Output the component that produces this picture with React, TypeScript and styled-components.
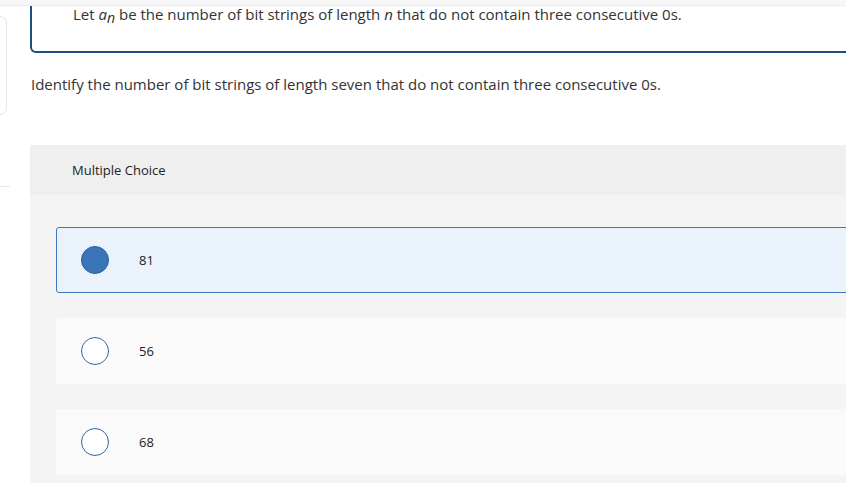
import React from "react";
import styled, { createGlobalStyle } from "styled-components";

const Global = createGlobalStyle`
  html, body { margin: 0; padding: 0; background: #ffffff; overflow: hidden; }
  body { font-family: "Open Sans", "Liberation Sans", sans-serif; color: #333333; }
`;

const Page = styled.div`
  width: 846px;
  height: 483px;
  overflow: hidden;
  display: flex;
  flex-direction: column;
`;

const TopStrip = styled.div`
  height: 5px;
  background: #f7f7f7;
  border-bottom: 1px solid #ececec;
  flex: none;
`;

const Main = styled.div`
  display: flex;
  flex: 1;
  min-height: 0;
`;

const Side = styled.div`
  width: 30px;
  flex: none;
  display: flex;
  flex-direction: column;
`;

const SideCard = styled.div`
  margin: 10px 0 0 -20px;
  width: 25px;
  height: 97px;
  border: 1px solid #e6e6e6;
  border-radius: 7px;
`;

const SideRule = styled.div`
  margin-top: 71px;
  width: 10px;
  height: 1px;
  background: #e6e6e6;
`;

const Content = styled.div`
  width: 900px;
  flex: none;
  display: flex;
  flex-direction: column;
`;

const PromptBox = styled.div`
  height: 45px;
  border-left: 2px solid #1f4b86;
  border-bottom: 2px solid #1f4b86;
  border-bottom-left-radius: 6px;
  padding-left: 41px;
  font-size: 15px;
  line-height: 16px;
`;

const Var = styled.i`
  font-style: italic;
`;

const Sub = styled.span`
  font-style: italic;
  font-size: 14px;
  position: relative;
  top: 3px;
`;

const Question = styled.p`
  margin: 21px 0 0 1px;
  font-size: 15px;
  line-height: 20px;
`;

const Panel = styled.section`
  margin-top: 51px;
  display: flex;
  flex-direction: column;
  flex: 1;
`;

const PanelHeader = styled.div`
  height: 50px;
  background: #efefef;
  display: flex;
  align-items: center;
  padding-left: 42px;
  font-size: 13px;
  color: #222222;
`;

const PanelBody = styled.div`
  flex: 1;
  background: #f4f4f4;
  padding: 32px 0 0 26px;
  display: flex;
  flex-direction: column;
  gap: 25px;
`;

const Option = styled.div<{ $selected?: boolean }>`
  height: 64px;
  display: flex;
  align-items: center;
  gap: 30px;
  padding-left: 24px;
  border: 1px solid ${(p) => (p.$selected ? "#3b78c2" : "transparent")};
  border-radius: 3px;
  background: ${(p) => (p.$selected ? "#eaf2fb" : "#fafafa")};
  font-size: 13px;
  color: #222222;
`;

const Radio = styled.span<{ $checked?: boolean }>`
  width: 28px;
  height: 28px;
  box-sizing: border-box;
  border-radius: 50%;
  flex: none;
  border: ${(p) => (p.$checked ? "1px solid #2a5f9e" : "1.5px solid #2f68a5")};
  background: ${(p) => (p.$checked ? "#3a75b9" : "#ffffff")};
`;

const choices = [
  { label: "81", selected: true },
  { label: "56", selected: false },
  { label: "68", selected: false },
];

export default function App() {
  return (
    <Page>
      <Global />
      <TopStrip />
      <Main>
        <Side>
          <SideCard />
          <SideRule />
        </Side>
        <Content>
          <PromptBox>
            Let <Var>a</Var><Sub>n</Sub> be the number of bit strings of length <Var>n</Var> that do not contain three consecutive 0s.
          </PromptBox>
          <Question>
            Identify the number of bit strings of length seven that do not contain three consecutive 0s.
          </Question>
          <Panel>
            <PanelHeader>Multiple Choice</PanelHeader>
            <PanelBody>
              {choices.map((c) => (
                <Option key={c.label} $selected={c.selected}>
                  <Radio $checked={c.selected} />
                  {c.label}
                </Option>
              ))}
            </PanelBody>
          </Panel>
        </Content>
      </Main>
    </Page>
  );
}
